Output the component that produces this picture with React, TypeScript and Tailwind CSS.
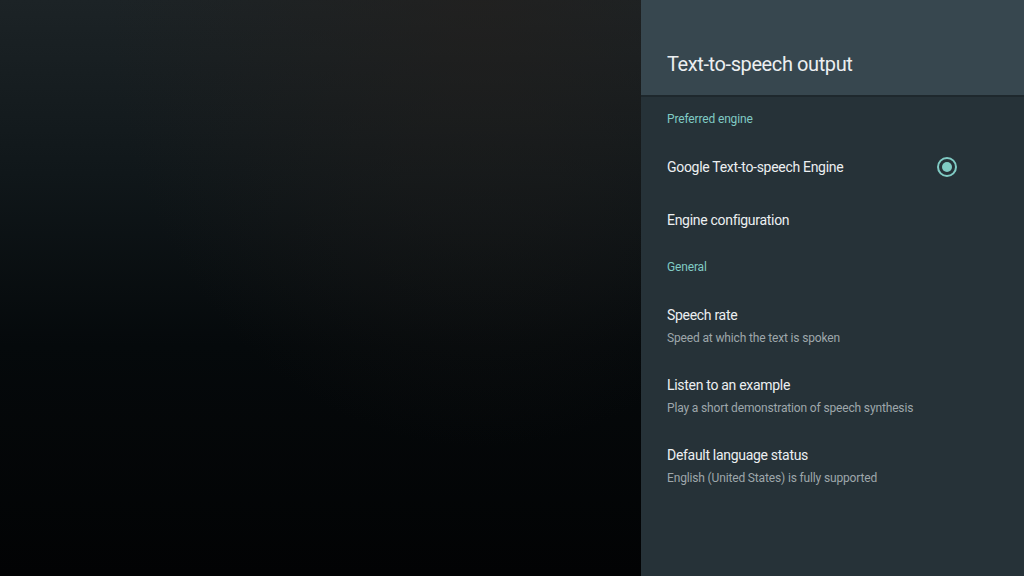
export default function App() {
  return (
    <div className="flex h-[576px] w-[1024px] overflow-hidden bg-black font-['Roboto',sans-serif]">
      <div className="relative h-full w-[641px] bg-[linear-gradient(180deg,#1c2326_0%,#10171a_30%,#05090b_60%,#020304_100%)]">
        <div className="absolute inset-0 bg-[radial-gradient(ellipse_at_75%_0%,rgba(36,31,28,0.6),transparent_55%)]" />
      </div>
      <div className="flex h-full flex-1 flex-col bg-[#263238] shadow-[-2px_0_4px_rgba(0,0,0,0.4)]">
        <div className="flex h-[97px] shrink-0 items-center border-b-2 border-[#1e282d] bg-[#37474f] px-[26px] pt-[32px]">
          <h1 className="text-[20px] font-normal leading-none tracking-[-0.4px] text-[#eceff1]">
            Text-to-speech output
          </h1>
        </div>
        <div className="flex flex-col px-[26px]">
          <p className="pt-[14px] text-[12px] leading-4 tracking-[-0.15px] text-[#80cbc4]">Preferred engine</p>
          <div className="flex h-[54px] items-end justify-between pb-[4px]">
            <span className="text-[14px] leading-5 tracking-[-0.3px] text-[#eceff1]">Google Text-to-speech Engine</span>
            <svg width="22" height="22" viewBox="0 0 22 22" className="mb-[-1px] mr-[40px]">
              <circle cx="11" cy="11" r="9" fill="none" stroke="#80cbc4" strokeWidth="2" />
              <circle cx="11" cy="11" r="5" fill="#80cbc4" />
            </svg>
          </div>
          <div className="flex h-[53px] items-end pb-[4px]">
            <span className="text-[14px] leading-5 tracking-[-0.3px] text-[#eceff1]">Engine configuration</span>
          </div>
          <p className="pt-[25px] text-[12px] leading-4 tracking-[-0.15px] text-[#80cbc4]">General</p>
          <Item title="Speech rate" sub="Speed at which the text is spoken" first />
          <Item title="Listen to an example" sub="Play a short demonstration of speech synthesis" />
          <Item title="Default language status" sub="English (United States) is fully supported" />
        </div>
      </div>
    </div>
  );
}

function Item({ title, sub, first }: { title: string; sub: string; first?: boolean }) {
  return (
    <div className={first ? "flex flex-col pt-[30px]" : "flex flex-col pt-[27px]"}>
      <span className="text-[14px] leading-5 tracking-[-0.3px] text-[#eceff1]">{title}</span>
      <span className="mt-[3px] text-[12px] leading-5 tracking-[-0.15px] text-[#9ea7ab]">{sub}</span>
    </div>
  );
}
